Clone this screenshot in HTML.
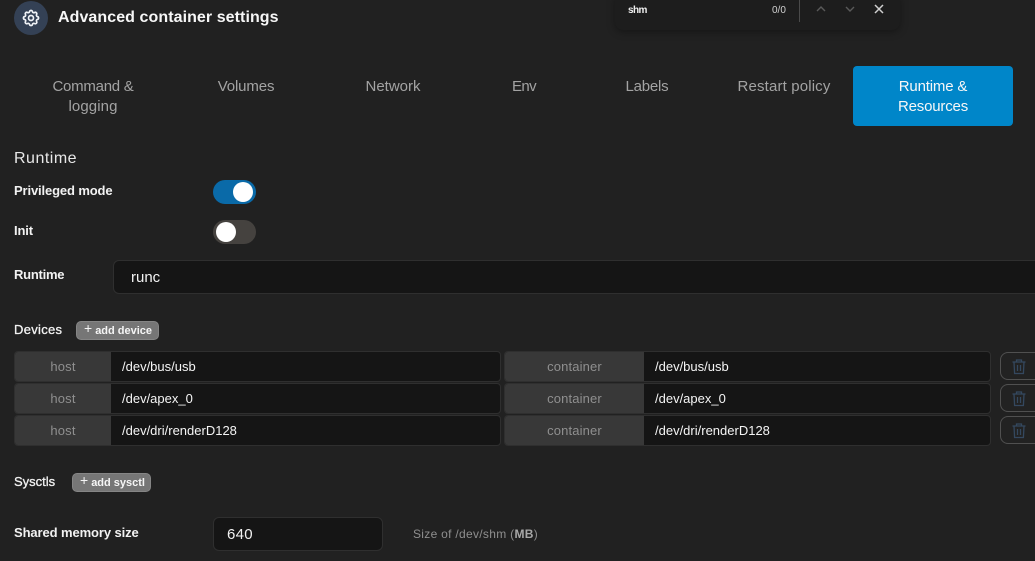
<!DOCTYPE html>
<html><head><meta charset="utf-8">
<style>
html,body{margin:0;padding:0;width:1035px;height:561px;overflow:hidden;background:#212121}
body{position:relative;font-family:"Liberation Sans",sans-serif;color:#fff}
.a{position:absolute;white-space:nowrap}
.tab{position:absolute;text-align:center;font-size:15px;line-height:20px;color:#a3a3a3;letter-spacing:-.1px;white-space:nowrap}
.lbl{position:absolute;font-size:13px;line-height:16px;font-weight:700;color:#f2f2f2;white-space:nowrap;letter-spacing:-.13px}
.reg{font-weight:400;-webkit-text-stroke:.3px #f2f2f2;letter-spacing:0}
.inp{position:absolute;background:#151515;border:1px solid #2f2f2f;box-sizing:border-box}
.add{position:absolute;background:#767676;border:1px solid #858585;box-sizing:border-box;border-radius:5px;height:19px;font-size:11px;font-weight:700;line-height:15px;color:#f5f5f5;white-space:nowrap}
.add i{font-style:normal;font-weight:400;font-size:14px;margin-right:3px;position:relative;top:-1px;margin-left:-1px}
.g{position:absolute;height:31px;box-sizing:border-box;border:1px solid #2f2f2f;border-radius:4px;background:#151515;overflow:hidden}
.g b{position:absolute;left:0;top:0;bottom:0;background:#383838;font-weight:400;font-size:13px;line-height:29px;text-align:center;color:#8f8f8f;letter-spacing:.15px}
.g span{position:absolute;top:0;font-size:13px;line-height:29px;color:#f5f5f5;letter-spacing:0;white-space:nowrap}
.del{position:absolute;left:1000px;width:45px;height:28px;box-sizing:border-box;border:1px solid #505050;border-radius:8px;background:#222}
.del svg{position:absolute;left:10px;top:5px}
</style></head><body>

<div class="a" style="left:14px;top:1px;width:34px;height:34px;border-radius:50%;background:#344155"></div>
<svg class="a" style="left:21px;top:8px" width="20" height="20" viewBox="0 0 24 24" fill="none" stroke="#f0f3f7" stroke-width="2" stroke-linecap="round" stroke-linejoin="round"><path d="M10.3 4.3c.4-1.8 3-1.8 3.4 0a1.7 1.7 0 0 0 2.6 1.1c1.5-.9 3.3.8 2.4 2.4a1.7 1.7 0 0 0 1 2.5c1.8.4 1.8 3 0 3.4a1.7 1.7 0 0 0-1 2.6c.9 1.5-.9 3.3-2.4 2.4a1.7 1.7 0 0 0-2.6 1c-.4 1.8-3 1.8-3.4 0a1.7 1.7 0 0 0-2.5-1c-1.6.9-3.3-.9-2.4-2.4a1.7 1.7 0 0 0-1.1-2.6c-1.8-.4-1.8-3 0-3.4a1.7 1.7 0 0 0 1.1-2.5c-.9-1.6.8-3.3 2.4-2.4a1.7 1.7 0 0 0 2.5-1.1z"/><circle cx="12" cy="12" r="3"/></svg>
<div class="a" style="left:58px;top:8px;font-size:16px;line-height:20px;font-weight:700;color:#f7f7f7;letter-spacing:.07px">Advanced container settings</div>

<div class="a" style="left:615px;top:-4px;width:285px;height:34px;background:#1d1d1d;border-radius:0 0 8px 8px;box-shadow:0 2px 8px rgba(0,0,0,.35)"></div>
<div class="a" style="left:628px;top:3px;font-size:10px;line-height:13px;font-weight:700;color:#f0f0f0;letter-spacing:-.6px;padding-top:1px">shm</div>
<div class="a" style="left:772px;top:3px;font-size:10px;line-height:13px;color:#d0d0d0;padding-top:1px">0/0</div>
<div class="a" style="left:799px;top:0;width:1px;height:22px;background:#4a4a4a"></div>
<svg class="a" style="left:814px;top:3px" width="14" height="12" viewBox="0 0 14 12" fill="none" stroke="#5a5a5a" stroke-width="1.4"><path d="M3 8l4-4 4 4"/></svg>
<svg class="a" style="left:843px;top:3px" width="14" height="12" viewBox="0 0 14 12" fill="none" stroke="#5a5a5a" stroke-width="1.4"><path d="M3 4l4 4 4-4"/></svg>
<svg class="a" style="left:872px;top:3px" width="14" height="12" viewBox="0 0 14 12" fill="none" stroke="#d0d0d0" stroke-width="1.5"><path d="M3 2l8 8M11 2l-8 8"/></svg>

<div class="tab" style="left:13px;width:160px;top:77px"><span style="letter-spacing:-.25px">Command &amp;</span><br><span style="letter-spacing:.1px">logging</span></div>
<div class="tab" style="left:166px;width:160px;top:77px;letter-spacing:-.13px">Volumes</div>
<div class="tab" style="left:313px;width:160px;top:77px;letter-spacing:0">Network</div>
<div class="tab" style="left:444px;width:160px;top:77px;letter-spacing:-.6px">Env</div>
<div class="tab" style="left:567px;width:160px;top:77px;letter-spacing:-.2px">Labels</div>
<div class="tab" style="left:704px;width:160px;top:77px;letter-spacing:.15px">Restart policy</div>
<div class="a" style="left:853px;top:66px;width:160px;height:60px;background:#0086c9;border-radius:4px"></div>
<div class="tab" style="left:853px;width:160px;top:77px;color:#f7f7f7;letter-spacing:-.18px">Runtime &amp;<br>Resources</div>

<div class="a" style="left:14px;top:149px;font-size:16px;line-height:20px;color:#e8e8e8;letter-spacing:.5px">Runtime</div>
<div class="lbl" style="left:14px;top:183px">Privileged mode</div>
<div class="a" style="left:213px;top:180px;width:43px;height:24px;border-radius:12px;background:#0a6aa8"></div>
<div class="a" style="left:233px;top:182px;width:20px;height:20px;border-radius:50%;background:#fff"></div>
<div class="lbl" style="left:14px;top:223px">Init</div>
<div class="a" style="left:213px;top:220px;width:43px;height:24px;border-radius:12px;background:#45423f"></div>
<div class="a" style="left:216px;top:222px;width:20px;height:20px;border-radius:50%;background:#fff"></div>

<div class="lbl" style="left:14px;top:267px;letter-spacing:-.25px">Runtime</div>
<div class="inp" style="left:113px;top:260px;width:940px;height:34px;border-radius:6px"></div>
<div class="a" style="left:131px;top:268px;font-size:15px;line-height:20px;color:#f2f2f2">runc</div>

<div class="lbl reg" style="left:14px;top:322px;letter-spacing:.3px">Devices</div>
<div class="add" style="left:76px;top:321px;width:83px;padding-left:8px"><i>+</i>add device</div>

<div class="g" style="left:14px;top:351px;width:487px"><b style="width:96px">host</b><span style="left:107px">/dev/bus/usb</span></div>
<div class="g" style="left:14px;top:383px;width:487px"><b style="width:96px">host</b><span style="left:107px">/dev/apex_0</span></div>
<div class="g" style="left:14px;top:415px;width:487px"><b style="width:96px">host</b><span style="left:107px">/dev/dri/renderD128</span></div>
<div class="g" style="left:504px;top:351px;width:487px"><b style="width:139px">container</b><span style="left:150px">/dev/bus/usb</span></div>
<div class="g" style="left:504px;top:383px;width:487px"><b style="width:139px">container</b><span style="left:150px">/dev/apex_0</span></div>
<div class="g" style="left:504px;top:415px;width:487px"><b style="width:139px">container</b><span style="left:150px">/dev/dri/renderD128</span></div>

<div class="del" style="top:352px"><svg width="16" height="17" viewBox="0 0 16 17" fill="none" stroke="#34485f" stroke-width="1.3"><path d="M1.5 4h13M5.5 4V2h5v2M3 4l.6 11.5h8.8L13 4M6.5 7v6M9.5 7v6"/></svg></div>
<div class="del" style="top:384px"><svg width="16" height="17" viewBox="0 0 16 17" fill="none" stroke="#34485f" stroke-width="1.3"><path d="M1.5 4h13M5.5 4V2h5v2M3 4l.6 11.5h8.8L13 4M6.5 7v6M9.5 7v6"/></svg></div>
<div class="del" style="top:416px"><svg width="16" height="17" viewBox="0 0 16 17" fill="none" stroke="#34485f" stroke-width="1.3"><path d="M1.5 4h13M5.5 4V2h5v2M3 4l.6 11.5h8.8L13 4M6.5 7v6M9.5 7v6"/></svg></div>

<div class="lbl reg" style="left:14px;top:474px">Sysctls</div>
<div class="add" style="left:72px;top:473px;width:79px;padding-left:8px"><i>+</i>add sysctl</div>

<div class="lbl" style="left:14px;top:525px;letter-spacing:-.1px">Shared memory size</div>
<div class="inp" style="left:213px;top:517px;width:170px;height:34px;border-radius:6px"></div>
<div class="a" style="left:227px;top:525px;font-size:15px;line-height:20px;color:#f2f2f2;letter-spacing:.3px">640</div>
<div class="a" style="left:413px;top:526px;font-size:12px;line-height:16px;color:#8f8f8f;letter-spacing:.3px">Size of /dev/shm (<b style="color:#a8a8a8">MB</b>)</div>
</body></html>
